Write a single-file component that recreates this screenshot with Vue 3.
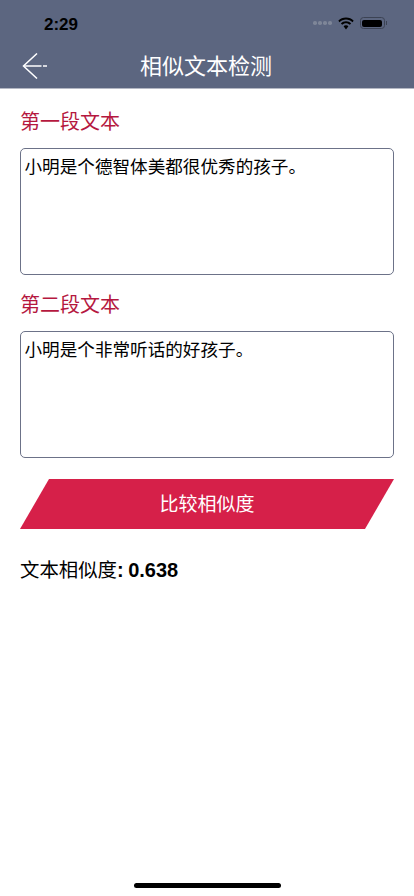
<template>
  <div class="page">
    <header class="top">
      <div class="status">
        <span class="time">2:29</span>
        <div class="status-right">
          <div class="signal"><i></i><i></i><i></i><i></i></div>
          <svg class="wifi" viewBox="0 0 18 13" width="18" height="13">
            <path d="M9 2.6c2.5 0 4.7 1 6.4 2.6l1.3-1.4C14.7 1.8 12 .6 9 .6S3.300 1.800 1.300 3.800l1.300 1.400C4.300 3.600 6.500 2.600 9 2.600z" fill="#000" />
            <path d="M9 6.300c1.500 0 2.800.6 3.800 1.500l1.300-1.400C12.800 5.100 11 4.300 9 4.300s-3.800.8-5.100 2.100l1.300 1.400c1-.9 2.300-1.500 3.800-1.500z" fill="#000" />
            <path d="M9 8.300c-1 0-1.800.4-2.400 1L9 12.400l2.400-3.100c-.6-.6-1.400-1-2.400-1z" fill="#000" />
          </svg>
          <div class="battery"><b></b></div>
          <span class="nub"></span>
        </div>
      </div>
      <div class="nav">
        <svg class="back" viewBox="0 0 26 26" width="26" height="26" fill="none" stroke="#fff" stroke-width="1.500">
          <path d="M15 .5 1.500 13 15 25.500" />
          <path d="M2 13h17.500" />
          <path d="M21 13h4" />
        </svg>
        <h1>相似文本检测</h1>
      </div>
    </header>

    <main class="body">
      <label class="label">第一段文本</label>
      <div class="box">{{ first }}</div>
      <label class="label second">第二段文本</label>
      <div class="box">{{ second }}</div>

      <div class="btn">比较相似度</div>

      <p class="result">文本相似度<b>: {{ score }}</b></p>
    </main>

    <div class="home"></div>
  </div>
</template>

<script setup>
import { ref } from "vue";

const first = ref("小明是个德智体美都很优秀的孩子。");
const second = ref("小明是个非常听话的好孩子。");
const score = ref("0.638");
</script>

<style scoped>
.page {
  position: relative;
  width: 414px;
  height: 896px;
  overflow: hidden;
  background: #fff;
  font-family: "Liberation Sans", "Noto Sans CJK SC", sans-serif;
}
.top {
  height: 89px;
  background: #5c6680;
  border-bottom: 1px solid #b4b8c4;
  box-sizing: border-box;
}
.status {
  height: 44px;
  display: flex;
  align-items: center;
  justify-content: space-between;
  padding: 3px 27px 0 44px;
  box-sizing: border-box;
}
.time {
  font-size: 17px;
  font-weight: 600;
  color: #000;
  margin-top: 2px;
}
.status-right {
  display: flex;
  align-items: center;
  margin-top: -1px;
}
.signal {
  display: flex;
  gap: 1.500px;
  margin-right: 5px;
}
.signal i {
  width: 3.500px;
  height: 3.500px;
  border-radius: 50%;
  background: #7e8698;
}
.wifi {
  margin-right: 5px;
}
.battery {
  width: 25px;
  height: 12px;
  border: 1px solid #3c4354;
  border-radius: 3.500px;
  padding: 1.500px;
  box-sizing: border-box;
  display: flex;
}
.battery b {
  flex: 1;
  background: #000;
  border-radius: 2px;
}
.nub {
  width: 1.500px;
  height: 4px;
  margin-left: 1px;
  background: #3c4354;
}
.nav {
  position: relative;
  height: 44px;
  display: flex;
  align-items: center;
  justify-content: center;
}
.nav h1 {
  margin: -5px 2px 0 0;
  font-size: 22px;
  font-weight: 400;
  color: #fff;
}
.back {
  position: absolute;
  left: 22px;
  top: 9px;
}
.body {
  padding: 0 20px;
}
.label {
  display: block;
  font-size: 20px;
  line-height: 28px;
  color: #b5183f;
  padding-top: 19px;
  margin-bottom: 12px;
}
.label.second {
  padding-top: 0;
  margin-top: 16px;
}
.box {
  height: 127px;
  box-sizing: border-box;
  border: 1px solid #6c7288;
  border-radius: 5px;
  padding: 6px 3.500px;
  font-size: 17.600px;
  line-height: 24px;
  color: #000;
}
.btn {
  height: 50px;
  margin-top: 21px;
  padding-bottom: 3px;
  box-sizing: border-box;
  background: #d62049;
  clip-path: polygon(29px 0, 100% 0, 345px 100%, 0 100%);
  color: #fff;
  font-size: 19px;
  display: flex;
  align-items: center;
  justify-content: center;
}
.result {
  margin: 27px 0 0;
  font-size: 19.400px;
  line-height: 28px;
  color: #000;
}
.result b {
  font-size: 20px;
  word-spacing: -1px;
}
.home {
  position: absolute;
  left: 134px;
  bottom: 8px;
  width: 147px;
  height: 5px;
  border-radius: 3px;
  background: #000;
}
</style>

<style>
body {
  margin: 0;
}
</style>
